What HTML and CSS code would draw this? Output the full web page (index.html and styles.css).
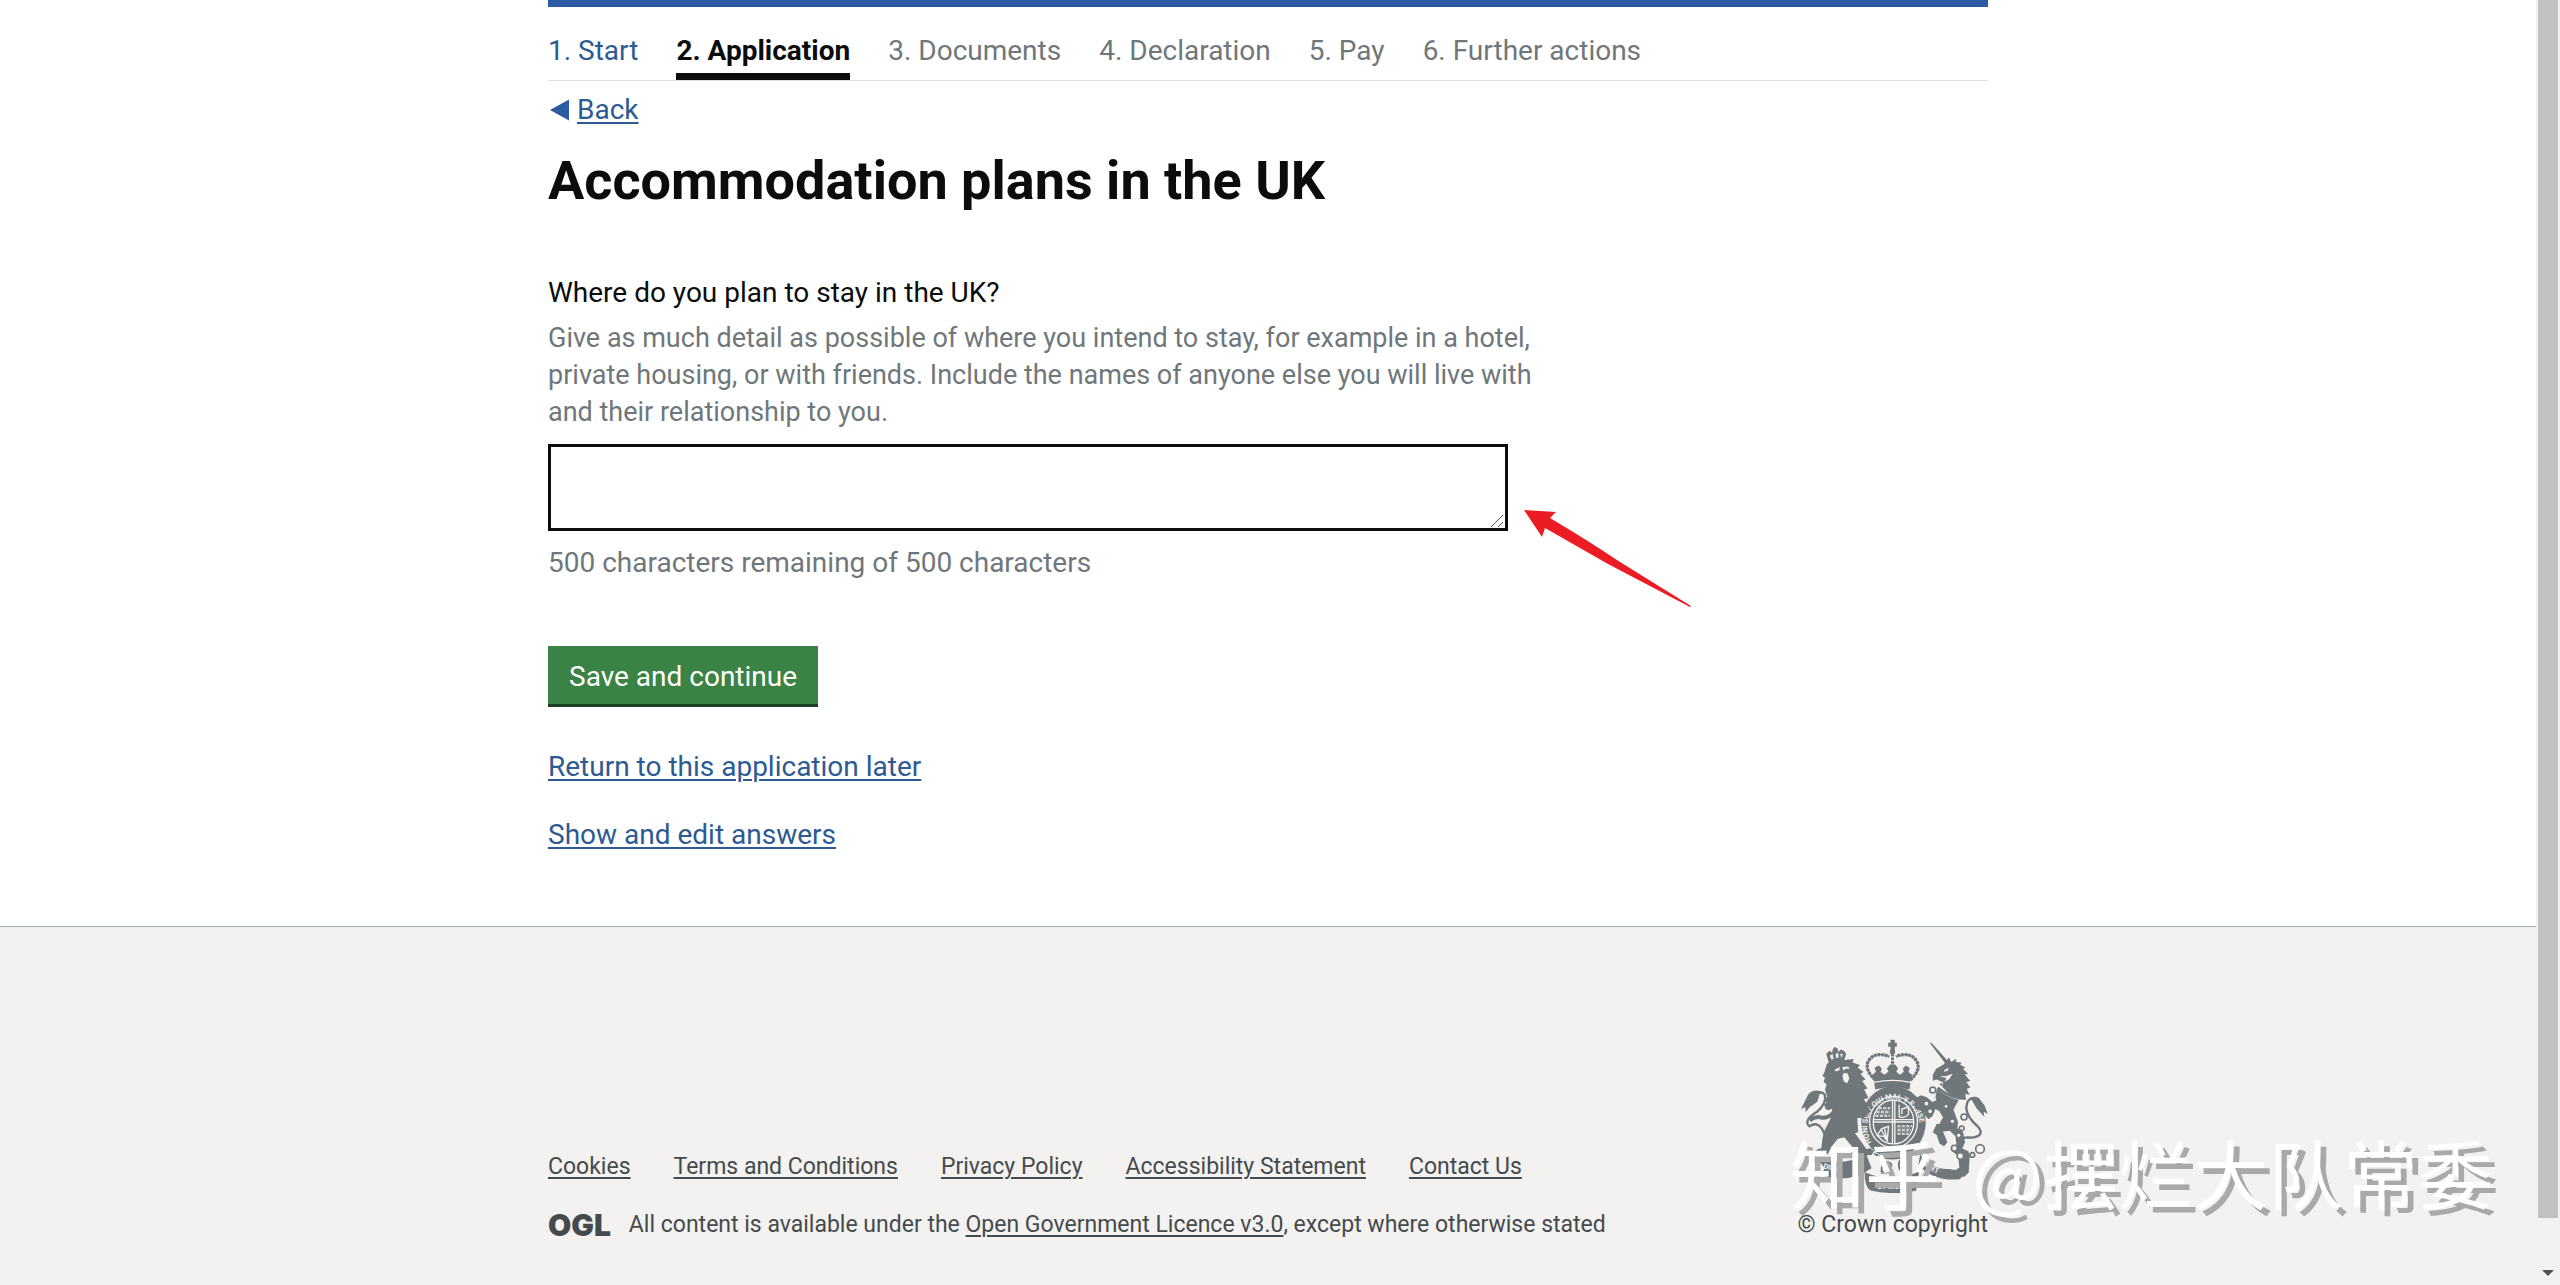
FILE: index.html
```html
<!DOCTYPE html>
<html lang="en">
<head>
    <meta charset="UTF-8">
    <meta name="viewport" content="width=device-width, initial-scale=1.0">
    <title>Accommodation plans in the UK</title>
    <link rel="stylesheet" href="styles.css">
</head>
<body>
    <div class="page">
        <div class="container content">
            <!-- Progress steps -->
            <nav class="steps">
                <a class="step step-done" href="#">1. Start</a>
                <a class="step step-current" href="#">2. Application</a>
                <span class="step">3. Documents</span>
                <span class="step">4. Declaration</span>
                <span class="step">5. Pay</span>
                <span class="step">6. Further actions</span>
            </nav>

            <div class="back">
                <svg class="back-arrow" viewBox="0 0 20 22" aria-hidden="true"><path d="M0 11 20 0v22z"/></svg>
                <a href="#">Back</a>
            </div>

            <main>
                <h1>Accommodation plans in the UK</h1>
                <form>
                    <label for="plans">Where do you plan to stay in the UK?</label>
                    <p class="hint" id="plans-hint">Give as much detail as possible of where you intend to stay, for example in a hotel,<br>private housing, or with friends. Include the names of anyone else you will live with<br>and their relationship to you.</p>
                    <div class="field">
                        <textarea id="plans" name="plans" maxlength="500" aria-describedby="plans-hint"></textarea>
                        <svg class="grip" viewBox="0 0 12 12" aria-hidden="true"><path d="M0 12 12 0M7 12l5-5"/></svg>
                        <svg class="pointer" viewBox="0 0 168 98" aria-hidden="true"><path d="M0 0 32 2 26 8 Q60 28 96 52L167 96 166 97 84 54 21 18 18 27z"/></svg>
                    </div>
                    <p class="count">500 characters remaining of 500 characters</p>
                    <button type="submit">Save and continue</button>
                </form>
                <p class="action"><a href="#">Return to this application later</a></p>
                <p class="action"><a href="#">Show and edit answers</a></p>
            </main>
        </div>

        <footer>
            <div class="container footer-row">
                <div class="footer-meta">
                    <nav class="footer-links">
                        <a href="#">Cookies</a>
                        <a href="#">Terms and Conditions</a>
                        <a href="#">Privacy Policy</a>
                        <a href="#">Accessibility Statement</a>
                        <a href="#">Contact Us</a>
                    </nav>
                    <div class="licence">
                        <span class="ogl">OGL</span>
                        <span>All content is available under the <a href="#">Open Government Licence v3.0</a>, except where otherwise stated</span>
                    </div>
                </div>
                <div class="crown">
                    <svg class="crest" viewBox="62 58 562 462" aria-hidden="true">
                        <defs>
                            <path id="garter" d="M274 368A79 84 0 1 1 406 368"/>
                            <path id="ribbon-left" d="M128 446Q190 466 262 428"/>
                            <path id="ribbon-right" d="M420 428Q456 470 540 472"/>
                        </defs>
                        <!-- Crown -->
                        <path d="M331 60h13v9h6v12h-6v10h-13V81h-7V69h7z"/>
                        <circle cx="337" cy="96" r="8"/>
                        <g fill="none" stroke="#6f777b">
                            <path stroke-width="10" stroke-dasharray="8 3" d="M285 180Q252 150 264 125 282 94 327 110M391 180Q424 150 410 125 392 94 347 110"/>
                            <path stroke-width="4" d="M285 180Q252 150 264 125 282 94 327 110M391 180Q424 150 410 125 392 94 347 110"/>
                            <path stroke-width="9" stroke-dasharray="8 3" d="M337 102v48"/>
                        </g>
                        <path d="M277 166l10-10-4-12 13-7 9 10-4 10 12 8 12-10-5-9 10-12h15l9 12-6 10 11 9 12-9-3-10 9-9 12 8-4 12 11 9-5 20Q337 174 283 186z"/>
                        <path d="M282 190q55-13 109 0l-3 19q-51-13-103 0z"/>
                        <!-- Shield and garter -->
                        <ellipse cx="340" cy="307" rx="97" ry="108"/>
                        <ellipse cx="340" cy="307" rx="72" ry="77" fill="none" stroke="#f3f2f1" stroke-width="4"/>
                        <text class="crest-text"><textPath href="#garter">HONI SOIT QUI MAL Y PENSE</textPath></text>
                        <g fill="none" stroke="#f3f2f1" stroke-width="4">
                            <ellipse cx="340" cy="307" rx="61" ry="66"/>
                            <path d="M337 242v130M279 300h122M279 307h122M344 242v130"/>
                            <path stroke-dasharray="9 4" d="M296 265h34M289 277h41M286 289h44M352 319h44M352 331h41M352 343h34"/>
                            <path stroke-dasharray="3 4" stroke-width="3" d="M289 271h41M287 283h43M352 325h42M352 337h37"/>
                            <path d="M357 255v36q16 7 28-7v-22l-20 6v16M325 320l-22 8-12 20 20 2 10 14zM312 322l8 36M303 330l14 25"/>
                        </g>
                        <!-- Lion -->
                        <path d="M146 131l-8-29 10-9 8 6 1-10 7-8 9 7v9l9-8 10 5 6 9-8 23q-21-9-36-1z"/>
                        <path fill="#f3f2f1" d="M149 107l8-4 3 15-7 1zM166 103l8-4 1 14-8 2zM180 102l8 1-5 12z"/>
                        <path d="M140 132q25-18 52-11l28-3-3 10 22 8-7 8 18 12-9 7 15 16-10 5 16 22-10 3 13 27-14 2 20 37-18 18-22 3 3 42-10 2 22 30 12 18 12-2 12 8-8 12-54 3-8-12 6-13-26-31-20 5-19 24-9 20-9 6-29 2-7-12 14-10 10-2 3-26 5-24 19-38 6-31-12 5-9-5-4-15 7-1-6-15 9-3-7-24 5-15-9-8 4-12-8-6 5-7z"/>
                        <path fill="#f3f2f1" d="M164 149l15-7-2 10-12 3zM187 142l17-2 4 8-12-2-7 7zM187 164l7-5 9 3 4 14-6 14-9-3-4-10z"/>
                        <path fill="none" stroke="#6f777b" stroke-width="12" d="M170 268q-24 30-46 26-18-6-36 8"/>
                        <path fill="none" stroke="#6f777b" stroke-width="7" d="M133 344Q116 300 88 320 67 304 108 278 140 252 134 226 124 211 104 224"/>
                        <path d="M129 219q-25-15-44 3l-10 20-13 26 13-5 1 14 13-15 22-16 7-23z"/>
                        <path d="M226 245q18 2 26 19l12 10-14 2-20-8z"/>
                        <!-- Unicorn -->
                        <path d="M448 68l8 3 50 56-8 7z"/>
                        <path d="M458 166l10-19 21-12 10-10 7-12 8 14 15-11-2 10 18 3-5 6 16 8-7 5 15 14-10 2 17 20-12 3 12 17-11 3 9 19-13-4 2 18q-36 5-72-40l4-12-20-9-12 4z"/>
                        <path fill="#f3f2f1" d="M492 151l14-7-3 9-10 3zM478 170l20-1 20-7-10 16-15 8 6-11z"/>
                        <path fill="none" stroke="#6f777b" stroke-width="8" d="M473 204q32 27 69 32"/>
                        <path fill="none" stroke="#6f777b" stroke-width="7" stroke-dasharray="6 6" d="M481 192q26 23 60 29"/>
                        <path d="M471 207q28 25 65 34l-16 29 14 37-2 19 17 11 6 30-8 20 18 8 4 14-3 50-14 13-20-7-5-14 11-8-4-34-19-15 14-19-3-25-17-17-26 3-8-18 14-25-12-19-11-6-9 22-12 9-10-12-5-15-19-2-12-17 15-9-7-9 16-8 17 6 17 14 12-5-3-9 2-13z"/>
                        <path d="M470 312l30 4-12 18 14 34-10 12-14-8-8-26-12-8z"/>
                        <g fill="#f3f2f1">
                            <circle cx="498" cy="260" r="4"/><circle cx="517" cy="305" r="5"/><circle cx="536" cy="347" r="5"/>
                        </g>
                        <path fill="none" stroke="#6f777b" stroke-width="7" d="M540 355q22-2 38-1 40-7 14-35-29-24-33-51 0-38 29-33"/>
                        <path d="M564 244q14-20 33-8l17 22 9 24-12-6 2 15-22-23-16-27z"/>
                        <g fill="#f3f2f1" stroke="#6f777b" stroke-width="5">
                            <circle cx="458" cy="211" r="9"/><circle cx="439" cy="252" r="8"/><circle cx="450" cy="275" r="8"/><circle cx="552" cy="292" r="9"/><circle cx="545" cy="326" r="7"/>
                            <circle cx="523" cy="386" r="9"/><circle cx="541" cy="409" r="10"/><circle cx="577" cy="406" r="7"/><circle cx="600" cy="388" r="13"/>
                        </g>
                        <!-- Motto ribbon -->
                        <path d="M112 419q82 22 146-15l16 42q-69 48-150 22l9-23zM420 404q30 46 86 44l55 8-22 23q-78 8-124-43zM253 457q80 37 164-1l-9 58q-68 14-137-1-18-10-18-56z"/>
                        <path fill="none" stroke="#6f777b" stroke-width="6" d="M282 402q50 30 111 0M305 462q-4-34 18-34 19 4 3 25-9 13-24 1M360 452q-14-38 23-36"/>
                        <text class="crest-text"><textPath href="#ribbon-left">DIEU</textPath></text>
                        <text class="crest-text"><textPath href="#ribbon-right">DROIT</textPath></text>
                        <text class="crest-text" x="292" y="508">ET MON</text>
                    </svg>
                    <div>© Crown copyright</div>
                </div>
            </div>
        </footer>
    </div>

    <div class="scrollbar">
        <div class="thumb"></div>
        <svg class="scroll-down" viewBox="0 0 12 6" aria-hidden="true"><path d="M0 0h12L6 6z"/></svg>
    </div>

    <div class="watermark"><span>知乎</span><span>@摆烂大队常委</span></div>
</body>
</html>
```

FILE: styles.css
```css
* {
    box-sizing: border-box;
}

body {
    margin: 0;
    display: flex;
    min-height: 100vh;
    background-color: #fff;
    color: #0b0c0c;
    font-family: Roboto, "Noto Sans", sans-serif;
    font-size: 28px;
    line-height: 37px;
}

h1, p {
    margin: 0;
}

.page {
    flex: 1;
    display: flex;
    flex-direction: column;
}

.container {
    width: 100%;
    max-width: 1440px;
    margin: 0 auto;
}

.content {
    border-top: 7px solid #2b5ba2;
    padding-bottom: 73px;
}

.content a {
    color: #2d5a93;
    text-decoration-thickness: 2px;
    text-underline-offset: 3px;
}

.steps {
    display: flex;
    gap: 38px;
    padding-top: 25px;
    border-bottom: 1px solid #dee0e2;
}

.step {
    height: 48px;
    color: #6f777b;
}

.content .step {
    text-decoration: none;
}

.content .step-current {
    color: #0b0c0c;
    font-weight: bold;
    border-bottom: 7px solid #0b0c0c;
}

.back {
    display: flex;
    align-items: center;
    gap: 8px;
    padding: 10px 0 0 2px;
}

.back-arrow {
    width: 19px;
    height: 22px;
    fill: #2b5ba2;
}

h1 {
    margin-top: 20px;
    font-size: 54px;
    line-height: 66px;
}

form {
    margin-top: 60px;
}

label {
    display: block;
}

.hint, .count {
    color: #6f777b;
}

.hint {
    margin-top: 9px;
    font-size: 27px;
}

.field {
    position: relative;
    max-width: 960px;
    margin-top: 13px;
}

textarea {
    display: block;
    width: 100%;
    height: 87px;
    padding: 6px;
    border: 3px solid #0b0c0c;
    border-radius: 0;
    background-color: #fff;
    font: inherit;
    resize: none;
}

.grip {
    position: absolute;
    right: 5px;
    bottom: 4px;
    width: 12px;
    height: 12px;
    fill: none;
    stroke: #555;
}

/* Arrow pointing at the answer box */
.pointer {
    position: absolute;
    left: 976px;
    top: 66px;
    width: 168px;
    height: 98px;
    fill: #ec1c24;
}

.count {
    margin-top: 13px;
}

button {
    display: block;
    margin-top: 65px;
    padding: 12px 21px 9px;
    border: 0;
    border-bottom: 3px solid #1c3f24;
    background-color: #3a8344;
    color: #fff;
    font: inherit;
}

.action {
    margin-top: 31px;
}

form + .action {
    margin-top: 41px;
}

footer {
    flex: 1;
    border-top: 1px solid #a1acb2;
    background-color: #f3f2f1;
    color: #454a4d;
    font-size: 23px;
    line-height: 30px;
}

footer a {
    color: #454a4d;
    text-decoration-thickness: 2px;
    text-underline-offset: 3px;
}

.footer-row {
    display: flex;
    align-items: flex-end;
    justify-content: space-between;
    padding: 112px 0 44px;
}

.footer-links {
    display: flex;
    gap: 43px;
    margin-bottom: 28px;
}

.licence {
    display: flex;
    gap: 18px;
}

.ogl {
    font-family: Inter, sans-serif;
    font-size: 30px;
    font-weight: 900;
}

.crown {
    text-align: right;
}

.crest {
    display: block;
    width: 187px;
    height: 154px;
    margin: 0 0 17px auto;
    fill: #6f777b;
}

.crest-text {
    fill: #f3f2f1;
    font-size: 22px;
    font-weight: bold;
}

.scrollbar {
    width: 24px;
    display: flex;
    flex-direction: column;
    align-items: center;
    background-color: #f1f1f1;
}

.thumb {
    width: 20px;
    height: calc(100vh - 67px);
    background-color: #c1c1c1;
}

.scroll-down {
    width: 12px;
    height: 6px;
    margin-top: 52px;
    fill: #505050;
}

.watermark {
    position: absolute;
    right: 67px;
    bottom: 60px;
    display: flex;
    gap: 32px;
    color: #fff;
    font-family: "Noto Sans CJK SC", sans-serif;
    font-size: 75px;
    line-height: 106px;
    text-shadow: 6px 6px 0 #a9a9a9;
}
```
